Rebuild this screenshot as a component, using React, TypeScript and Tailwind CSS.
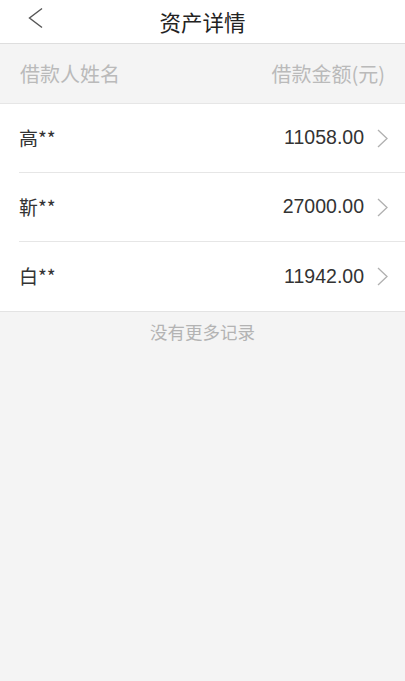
const rows = [
  { name: "高**", amount: "11058.00" },
  { name: "靳**", amount: "27000.00" },
  { name: "白**", amount: "11942.00" },
];

function Chevron() {
  return (
    <svg width="11" height="19" viewBox="0 0 11 19" className="shrink-0">
      <path d="M1 1 L10 9.5 L1 18" fill="none" stroke="#b0b0b0" strokeWidth="1.3" />
    </svg>
  );
}

function BackIcon() {
  return (
    <svg width="16" height="22" viewBox="0 0 16 22" className="absolute left-[28px] top-[7px]">
      <path d="M14 1.5 L1.5 11 L14 20.5" fill="none" stroke="#555" strokeWidth="1.4" />
    </svg>
  );
}

export default function App() {
  return (
    <div
      className="min-h-[681px] w-[405px] bg-[#f4f4f4] flex flex-col"
      style={{ fontFamily: '"Noto Sans CJK SC", "Liberation Sans", sans-serif' }}
    >
      {/* 顶部导航 */}
      <div className="h-[44px] bg-white border-b border-[#dedede] flex items-center relative">
        <BackIcon />
        <span className="flex-1 text-center text-[21.5px] text-[#222] leading-none">资产详情</span>
      </div>

      {/* 表头 */}
      <div className="h-[60px] flex items-center justify-between px-[20px] text-[20px] text-[#bababa] border-b border-[#e6e6e6]">
        <span>借款人姓名</span>
        <span>借款金额(元)</span>
      </div>

      {/* 列表 */}
      <div className="bg-white border-b border-[#e3e3e3]">
        {rows.map((r, i) => (
          <div key={i} className="pl-[19px]">
            <div
              className={`h-[69px] flex items-center justify-between pr-[17px] ${i < rows.length - 1 ? "border-b border-[#e6e6e6]" : ""}`}
            >
              <span className="text-[19px] text-[#333]">{r.name}</span>
              <div className="flex items-center gap-[13px]">
                <span className="text-[19.5px] text-[#333]" style={{ fontFamily: '"Liberation Sans", sans-serif' }}>
                  {r.amount}
                </span>
                <Chevron />
              </div>
            </div>
          </div>
        ))}
      </div>

      <div className="text-center text-[17.5px] text-[#b3b3b3] pt-[7px]">没有更多记录</div>
    </div>
  );
}
